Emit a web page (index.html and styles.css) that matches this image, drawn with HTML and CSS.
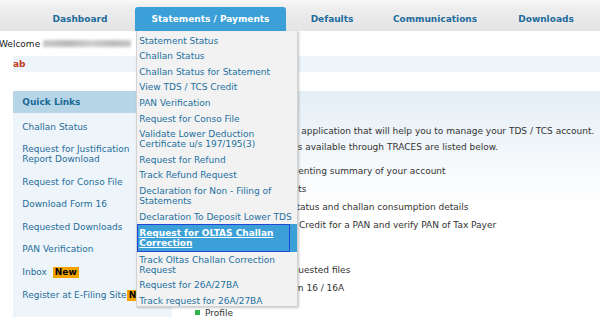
FILE: index.html
```html
<!DOCTYPE html>
<html>
<head>
<meta charset="utf-8">
<title>TRACES</title>
<link rel="stylesheet" href="styles.css">
</head>
<body>
<div class="page">
  <nav class="topnav">
    <ul class="tabs">
      <li class="tab t-dash">Dashboard</li>
      <li class="tab t-stmt active">Statements / Payments
        <ul class="dropdown">
          <li>Statement Status</li>
          <li>Challan Status</li>
          <li>Challan Status for Statement</li>
          <li>View TDS / TCS Credit</li>
          <li>PAN Verification</li>
          <li>Request for Conso File</li>
          <li>Validate Lower Deduction<br>Certificate u/s 197/195(3)</li>
          <li>Request for Refund</li>
          <li>Track Refund Request</li>
          <li>Declaration for Non - Filing of<br>Statements</li>
          <li>Declaration To Deposit Lower TDS</li>
          <li class="hover"><a class="focus">Request for OLTAS Challan<br>Correction</a></li>
          <li>Track Oltas Challan Correction<br>Request</li>
          <li>Request for 26A/27BA</li>
          <li class="last">Track request for 26A/27BA</li>
        </ul>
      </li>
      <li class="tab t-def">Defaults</li>
      <li class="tab t-comm">Communications</li>
      <li class="tab t-down">Downloads</li>
    </ul>
  </nav>

  <div class="welcome">Welcome <span class="name-blur"></span></div>
  <div class="userbar"><span class="ab">ab</span></div>

  <div class="content">
    <aside class="quick">
      <h3>Quick Links</h3>
      <ul>
        <li>Challan Status</li>
        <li>Request for Justification Report Download</li>
        <li>Request for Conso File</li>
        <li>Download Form 16</li>
        <li>Requested Downloads</li>
        <li>PAN Verification</li>
        <li>Inbox <span class="new">New</span></li>
        <li>Register at E-Filing Site<span class="new tight">New</span></li>
      </ul>
    </aside>
    <main class="main">
      <p class="intro">TRACES is a web-based application that will help you to manage your TDS / TCS account.<br>Most of the key features available through TRACES are listed below.</p>
      <ul class="features">
        <li>Your Dashboard presenting summary of your account</li>
        <li>Track your Statements</li>
        <li>View all statement status and challan consumption details</li>
        <li>View your TDS / TCS Credit for a PAN and verify PAN of Tax Payer</li>
        <li class="mid">Submit requests</li>
        <li>Download all the requested files</li>
        <li>Download every Form 16 / 16A</li>
        <li class="after">Profile</li>
      </ul>
    </main>
  </div>
</div>
</body>
</html>
```

FILE: styles.css
```css
html, body {
  margin: 0;
  padding: 0;
}
body {
  font-family: "DejaVu Sans", Verdana, sans-serif;
  font-size: 9px;
  color: #2b2b2b;
  background: #fff;
  width: 600px;
  height: 317px;
  overflow: hidden;
}
.page {
  width: 600px;
  height: 317px;
  overflow: hidden;
}
ul {
  list-style: none;
  margin: 0;
  padding: 0;
}

/* top navigation */
.topnav {
  height: 31px;
  background: linear-gradient(to bottom, #f8f8f8 0, #eeeeee 25%, #e4e4e4 100%);
}
.tabs {
  display: flex;
  align-items: flex-end;
  height: 31px;
  padding-left: 25px;
}
.tab {
  height: 24px;
  display: flex;
  align-items: center;
  justify-content: center;
  font-weight: bold;
  color: #1d6b9b;
}
.t-dash { width: 110px; }
.t-stmt { width: 151px; }
.t-def { width: 92px; }
.t-comm { width: 114px; }
.t-down { width: 108px; }
.tab.active {
  position: relative;
  background: #3ba0d7;
  color: #fff;
  border-radius: 3px 3px 0 0;
}

/* dropdown menu */
.dropdown {
  position: absolute;
  left: 1px;
  top: 24px;
  width: 160px;
  padding-top: 1.9px;
  background: #f2f2f2;
  border: 1px solid #d2d2d2;
  border-top: none;
  box-shadow: 1px 1px 2px rgba(0, 0, 0, 0.22);
  font-weight: normal;
  color: #23709f;
  z-index: 5;
}
.dropdown li {
  padding: 2.8px 0 2.8px 2.3px;
  line-height: 10px;
  white-space: nowrap;
}
.dropdown li.last {
  padding-bottom: 0;
}
.dropdown li.hover {
  padding: 0;
  background: #3ba0d7;
}
.dropdown .focus {
  display: block;
  width: 150px;
  padding: 2.8px 0 2.8px 1.3px;
  border: 1px solid #2446d8;
  color: #fff;
  font-weight: bold;
  text-decoration: underline;
}

/* welcome rows */
.welcome {
  height: 25px;
  display: flex;
  align-items: center;
  margin-left: -1px;
  color: #222;
}
.name-blur {
  display: inline-block;
  width: 88px;
  height: 7px;
  margin-left: 3px;
  background: linear-gradient(to right, #c9c9c9, #b9b9b9 30%, #cfcfcf 55%, #bcbcbc 80%, #c8c8c8);
  filter: blur(1.4px);
}
.userbar {
  height: 16px;
  margin-left: 13px;
  margin-bottom: 19px;
  background: #edf4fa;
  display: flex;
  align-items: center;
}
.ab {
  color: #c23b22;
  font-weight: bold;
}

/* content */
.content {
  display: flex;
  margin-left: 13px;
  height: 226px;
}
.quick {
  width: 159px;
  background: #edf5fa;
}
.quick h3 {
  margin: 0;
  height: 22px;
  line-height: 22px;
  padding-left: 9.3px;
  background: #b6d5e6;
  color: #1a6a97;
  font-size: 9px;
  font-weight: bold;
}
.quick ul {
  padding: 2.5px 15px 0 9.3px;
}
.quick li {
  padding: 6.25px 0;
  line-height: 10px;
  color: #276c99;
}
.new {
  display: inline-block;
  line-height: 11px;
  padding: 0 2px;
  margin-left: 3px;
  background: #f5a300;
  color: #000;
  font-weight: bold;
}
.new.tight {
  margin-left: 0;
}

.main {
  flex: 1;
  padding: 32px 0 0 21px;
  background: linear-gradient(to bottom, #e4eef6 0, #f1f6fa 55px, #ffffff 115px);
  color: #333;
}
.intro {
  margin: 0;
  line-height: 16px;
  white-space: nowrap;
}
.features {
  margin: 7px 0 0 2px;
}
.features li {
  line-height: 18px;
  white-space: nowrap;
}
.features li::before {
  content: "";
  display: inline-block;
  width: 5px;
  height: 5px;
  margin-right: 5px;
  background: #2fb34a;
  vertical-align: 1px;
}
.features li.mid {
  padding: 4px 0 5px;
}
.features li.after {
  margin-top: 7px;
}
```
